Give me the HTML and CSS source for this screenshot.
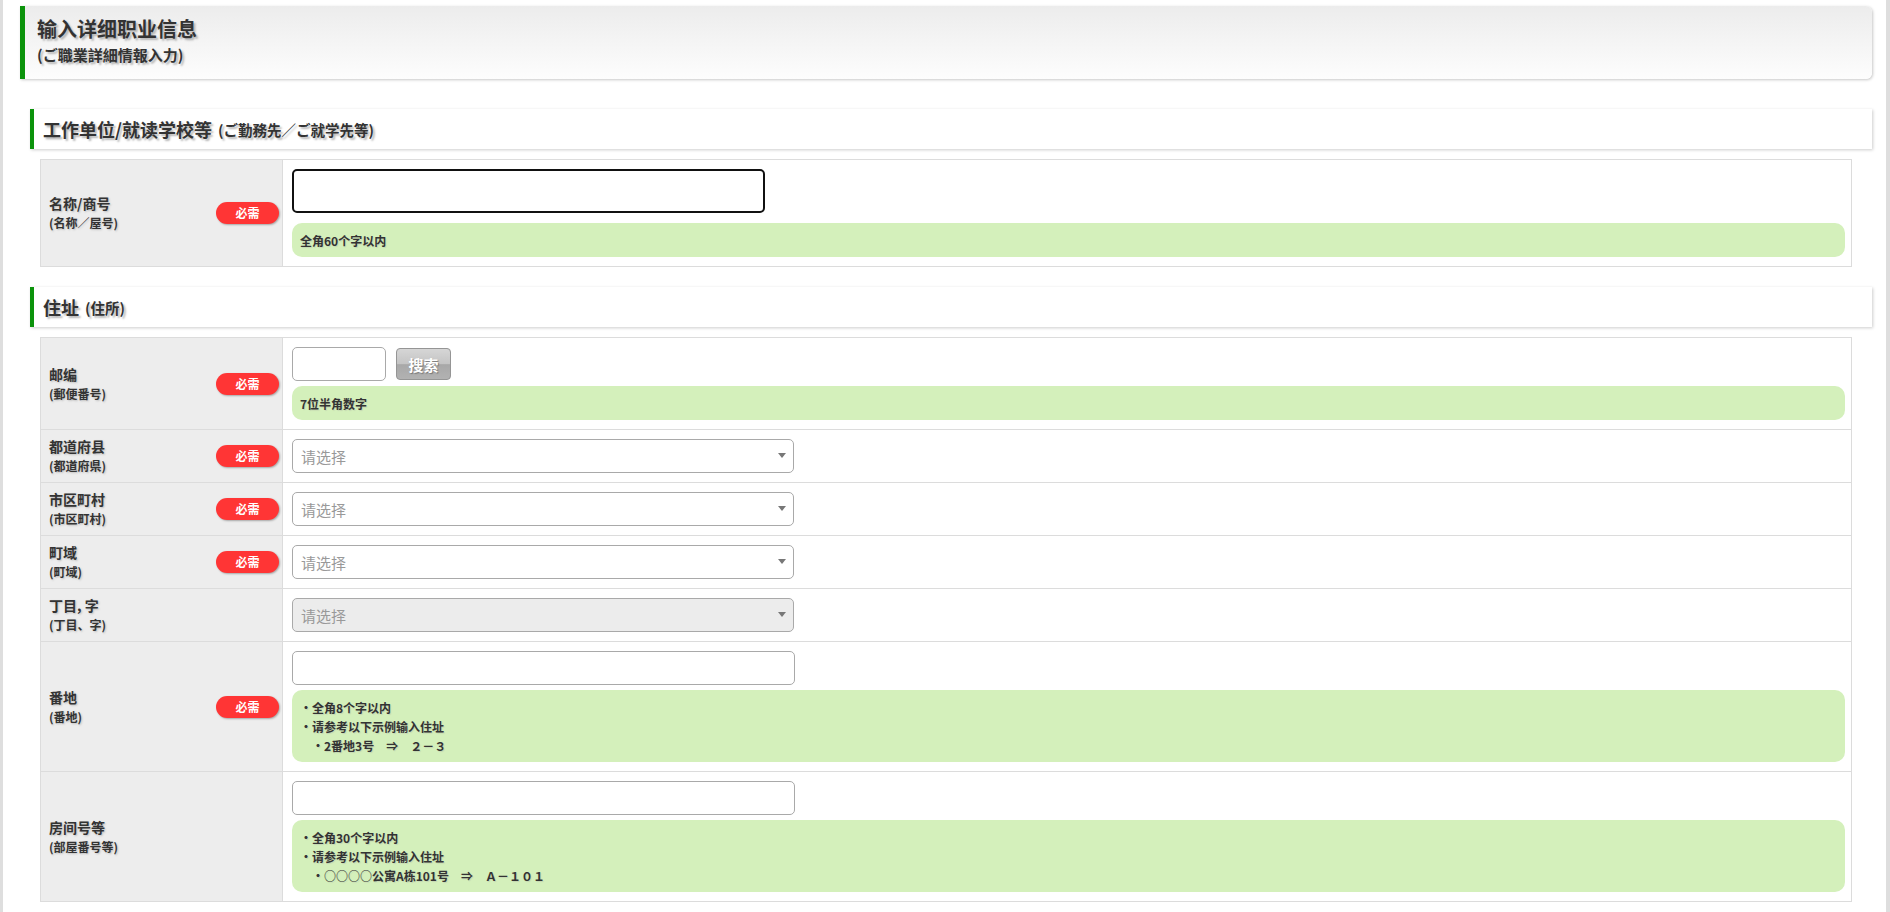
FILE: index.html
```html
<!DOCTYPE html>
<html lang="zh-CN">
<head>
<meta charset="utf-8">
<title>输入详细职业信息</title>
<link rel="stylesheet" href="styles.css">
</head>
<body>
<div class="page">
  <div class="page-head">
    <h1 class="page-title">输入详细职业信息</h1>
    <p class="page-sub">(ご職業詳細情報入力)</p>
  </div>

  <h2 class="sec-head">工作单位/就读学校等 <span class="sec-sub">(ご勤務先／ご就学先等)</span></h2>
  <table class="form-table">
    <colgroup><col class="c-lbl"><col class="c-fld"></colgroup>
    <tr>
      <th class="lbl">
        <div class="lbl-wrap">
          <div class="lbl-text"><span class="lbl-main">名称/商号</span><span class="lbl-jp">(名称／屋号)</span></div>
          <span class="req">必需</span>
        </div>
      </th>
      <td class="fld">
        <input class="inp inp-focus" type="text">
        <div class="hint">全角60个字以内</div>
      </td>
    </tr>
  </table>

  <h2 class="sec-head sec-head2">住址 <span class="sec-sub">(住所)</span></h2>
  <table class="form-table">
    <colgroup><col class="c-lbl"><col class="c-fld"></colgroup>
    <tr>
      <th class="lbl">
        <div class="lbl-wrap">
          <div class="lbl-text"><span class="lbl-main">邮编</span><span class="lbl-jp">(郵便番号)</span></div>
          <span class="req">必需</span>
        </div>
      </th>
      <td class="fld">
        <div class="zip-line">
          <input class="inp inp-zip" type="text">
          <button class="btn-search" type="button">搜索</button>
        </div>
        <div class="hint">7位半角数字</div>
      </td>
    </tr>
    <tr>
      <th class="lbl">
        <div class="lbl-wrap">
          <div class="lbl-text"><span class="lbl-main">都道府县</span><span class="lbl-jp">(都道府県)</span></div>
          <span class="req">必需</span>
        </div>
      </th>
      <td class="fld">
        <div class="sel-wrap"><select class="sel"><option>请选择</option></select></div>
      </td>
    </tr>
    <tr>
      <th class="lbl">
        <div class="lbl-wrap">
          <div class="lbl-text"><span class="lbl-main">市区町村</span><span class="lbl-jp">(市区町村)</span></div>
          <span class="req">必需</span>
        </div>
      </th>
      <td class="fld">
        <div class="sel-wrap"><select class="sel"><option>请选择</option></select></div>
      </td>
    </tr>
    <tr>
      <th class="lbl">
        <div class="lbl-wrap">
          <div class="lbl-text"><span class="lbl-main">町域</span><span class="lbl-jp">(町域)</span></div>
          <span class="req">必需</span>
        </div>
      </th>
      <td class="fld">
        <div class="sel-wrap"><select class="sel"><option>请选择</option></select></div>
      </td>
    </tr>
    <tr>
      <th class="lbl">
        <div class="lbl-wrap">
          <div class="lbl-text"><span class="lbl-main">丁目, 字</span><span class="lbl-jp">(丁目、字)</span></div>
        </div>
      </th>
      <td class="fld">
        <div class="sel-wrap"><select class="sel sel-disabled" disabled><option>请选择</option></select></div>
      </td>
    </tr>
    <tr>
      <th class="lbl">
        <div class="lbl-wrap">
          <div class="lbl-text"><span class="lbl-main">番地</span><span class="lbl-jp">(番地)</span></div>
          <span class="req">必需</span>
        </div>
      </th>
      <td class="fld">
        <input class="inp inp-wide" type="text">
        <div class="hint">
          <div>・全角8个字以内</div>
          <div>・请参考以下示例输入住址</div>
          <div class="ex">・2番地3号　⇒　２－３</div>
        </div>
      </td>
    </tr>
    <tr>
      <th class="lbl">
        <div class="lbl-wrap">
          <div class="lbl-text"><span class="lbl-main">房间号等</span><span class="lbl-jp">(部屋番号等)</span></div>
        </div>
      </th>
      <td class="fld">
        <input class="inp inp-wide" type="text">
        <div class="hint">
          <div>・全角30个字以内</div>
          <div>・请参考以下示例输入住址</div>
          <div class="ex">・○○○○公寓A栋101号　⇒　Ａ－１０１</div>
        </div>
      </td>
    </tr>
  </table>
</div>
</body>
</html>
```

FILE: styles.css
```css
html, body {
  margin: 0;
  padding: 0;
  background: #fff;
}
body {
  font-family: "Noto Sans CJK SC", "Noto Sans CJK JP", "Liberation Sans", sans-serif;
  color: #333;
}
.page {
  box-sizing: border-box;
  width: 1890px;
  min-height: 912px;
  border-left: 3px solid #dedede;
  border-right: 4px solid #dedede;
  padding: 6px 14px 0 17px;
}
.page-head {
  box-sizing: border-box;
  height: 73px;
  border-left: 5px solid #0b930b;
  border-radius: 0 6px 6px 0;
  background: linear-gradient(to bottom, #ececec, #fdfdfd);
  box-shadow: 1px 1px 3px rgba(0,0,0,0.22);
  padding: 9px 0 0 12px;
}
.page-title {
  margin: 0;
  font-size: 20px;
  line-height: 28px;
  font-weight: bold;
  color: #333;
  text-shadow: 2px 2px 2px #b5b5b5;
}
.page-sub {
  margin: 2px 0 0;
  font-size: 15px;
  line-height: 20px;
  font-weight: bold;
  color: #333;
  text-shadow: 2px 2px 2px #b5b5b5;
}
.sec-head {
  box-sizing: border-box;
  display: flex;
  align-items: center;
  height: 40px;
  margin: 30px 0 0 10px;
  padding-left: 9px;
  border-left: 4px solid #0b930b;
  background: #fff;
  box-shadow: 1px 1px 3px rgba(0,0,0,0.2);
  font-size: 18px;
  font-weight: bold;
  color: #333;
  text-shadow: 2px 2px 2px #b5b5b5;
}
.sec-head2 {
  margin-top: 20px;
}
.sec-sub {
  font-size: 14.5px;
  margin-left: 6px;
}
.form-table {
  box-sizing: border-box;
  width: 1812px;
  margin: 10px 0 0 20px;
  border-collapse: collapse;
  table-layout: fixed;
}
.c-lbl {
  width: 242px;
}
.form-table th, .form-table td {
  border: 1px solid #dcdcdc;
  padding: 0;
  vertical-align: middle;
  text-align: left;
}
.lbl {
  background: #ededed;
  padding: 0 3px 0 8px !important;
}
.lbl-wrap {
  display: flex;
  align-items: center;
  justify-content: space-between;
}
.lbl-text {
  display: flex;
  flex-direction: column;
  text-shadow: 1px 1px 2px #bdbdbd;
}
.lbl-main {
  font-size: 14px;
  line-height: 19px;
  font-weight: bold;
  color: #333;
}
.lbl-jp {
  font-size: 12px;
  line-height: 19px;
  font-weight: bold;
  color: #333;
}
.req {
  display: inline-block;
  width: 63px;
  height: 22px;
  line-height: 22px;
  border-radius: 11px;
  background: #ff3535;
  color: #fff;
  font-size: 12px;
  font-weight: bold;
  text-align: center;
  box-shadow: 1px 1px 2px rgba(0,0,0,0.3);
}
.fld {
  padding: 9px 8px 9px 9px !important;
  background: #fff;
}
.inp {
  display: block;
  box-sizing: border-box;
  height: 34px;
  border: 1px solid #a9a9a9;
  border-radius: 5px;
  background: #fff;
  font-size: 14px;
  padding: 0 8px;
  margin: 0;
}
.inp-focus {
  width: 473px;
  height: 44px;
  border: 2px solid #111;
  margin-bottom: 10px;
}
.inp-wide {
  width: 503px;
  margin-bottom: 5px;
}
.zip-line {
  display: flex;
  align-items: center;
  gap: 10px;
  margin-bottom: 5px;
}
.inp-zip {
  width: 94px;
  height: 34px;
}
.btn-search {
  box-sizing: border-box;
  width: 55px;
  height: 32px;
  border: 1px solid #959595;
  border-radius: 4px;
  background: linear-gradient(to bottom, #d6d6d6 0%, #c4c4c4 50%, #a8a8a8 52%, #b2b2b2 100%);
  color: #fff;
  font-family: "Noto Sans CJK SC", "Noto Sans CJK JP", sans-serif;
  font-size: 15px;
  font-weight: bold;
  text-shadow: 1px 1px 1px #777;
  padding: 0;
}
.hint {
  box-sizing: border-box;
  width: 1553px;
  background: #d4f0bb;
  border-radius: 10px;
  padding: 8px 8px 7px 8px;
  font-size: 12px;
  line-height: 19px;
  font-weight: bold;
  color: #333;
  text-shadow: 1px 1px 1px #c4d6b2;
}
.hint .ex {
  padding-left: 12px;
}
.sel-wrap {
  position: relative;
  width: 502px;
}
.sel-wrap::after {
  content: "";
  position: absolute;
  right: 8px;
  top: 14px;
  width: 0;
  height: 0;
  border-left: 4px solid transparent;
  border-right: 4px solid transparent;
  border-top: 5px solid #777;
  pointer-events: none;
}
.sel {
  -webkit-appearance: none;
  appearance: none;
  display: block;
  box-sizing: border-box;
  width: 502px;
  height: 34px;
  border: 1px solid #a9a9a9;
  border-radius: 5px;
  background: #fff;
  color: #999;
  font-family: "Noto Sans CJK SC", "Noto Sans CJK JP", sans-serif;
  font-size: 15px;
  padding: 0 8px;
  margin: 0;
}
.sel-disabled {
  background: #ececec;
  opacity: 1;
}
```
